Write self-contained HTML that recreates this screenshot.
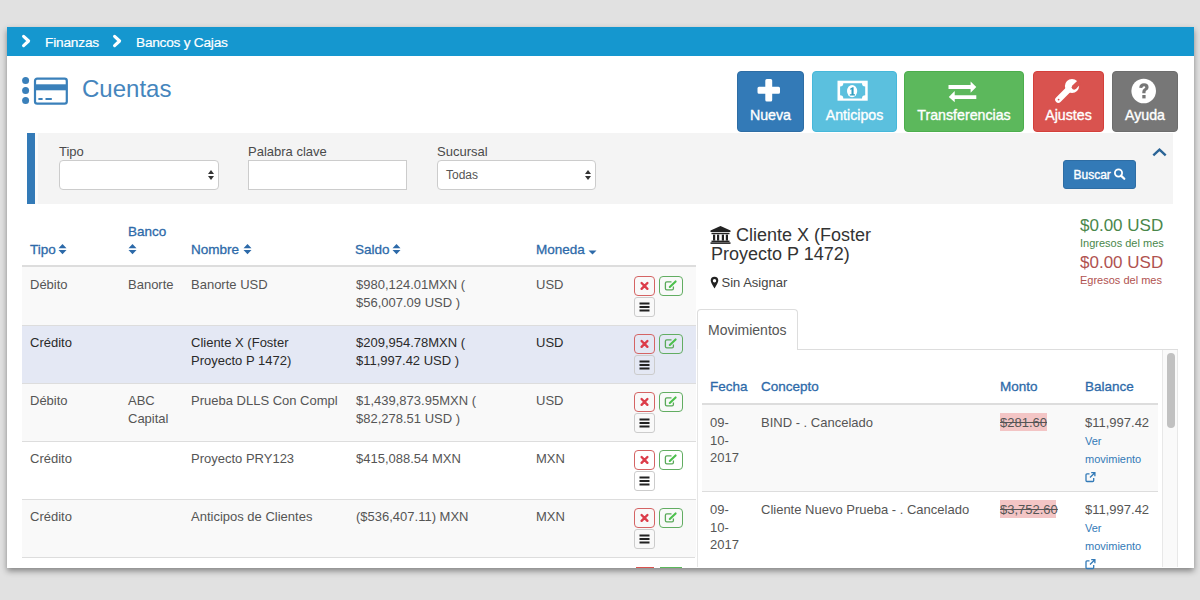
<!DOCTYPE html>
<html><head><meta charset="utf-8"><style>
html,body{margin:0;padding:0;}
body{width:1200px;height:600px;background:#e1e1e1;position:relative;overflow:hidden;font-family:"Liberation Sans", sans-serif;}
.a{position:absolute;}
.t{position:absolute;white-space:nowrap;}
s{text-decoration:line-through;}
</style></head><body>
<div class="a" style="left:7px;top:27px;width:1187px;height:541px;background:#fff;box-shadow:0 3px 6px rgba(0,0,0,0.42);"></div>
<div class="a" style="left:7px;top:27px;width:1187px;height:29px;background:#1597cf;"></div>
<svg class="a" style="left:21px;top:34.3px" width="12" height="14" viewBox="0 0 12 14"><path d="M2.6 2.3 L7.6 7 L2.6 11.7" fill="none" stroke="#fff" stroke-width="3.1" stroke-linejoin="round" stroke-linecap="round"/></svg>
<svg class="a" style="left:112px;top:34.3px" width="12" height="14" viewBox="0 0 12 14"><path d="M2.6 2.3 L7.6 7 L2.6 11.7" fill="none" stroke="#fff" stroke-width="3.1" stroke-linejoin="round" stroke-linecap="round"/></svg>
<div class="t " style="left:45px;top:35.85px;font-size:13.7px;line-height:13.7px;color:#fff;font-weight:normal;letter-spacing:-0.2px;-webkit-text-stroke:0.2px #fff;">Finanzas</div>
<div class="t " style="left:136px;top:35.85px;font-size:13.7px;line-height:13.7px;color:#fff;font-weight:normal;letter-spacing:-0.25px;-webkit-text-stroke:0.2px #fff;">Bancos y Cajas</div>
<svg class="a" style="left:20px;top:75px" width="50" height="32" viewBox="0 0 50 32">
<circle cx="5.6" cy="5.5" r="3.5" fill="#3a80ba"/><circle cx="5.6" cy="15.6" r="3.5" fill="#3a80ba"/><circle cx="5.6" cy="25.5" r="3.5" fill="#3a80ba"/>
<rect x="15" y="3.7" width="31.8" height="25" rx="2.2" fill="none" stroke="#3a80ba" stroke-width="2.2"/>
<rect x="15" y="9.3" width="32" height="6" fill="#3a80ba"/>
<rect x="18.4" y="23" width="4.2" height="2" fill="#3a80ba"/><rect x="25.5" y="23" width="6.3" height="2" fill="#3a80ba"/>
</svg>
<div class="t " style="left:82px;top:76.50px;font-size:24px;line-height:24px;color:#4585bd;font-weight:normal;">Cuentas</div>
<div class="a" style="left:737px;top:71px;width:67px;height:61px;background:#337ab7;border:1px solid #2e6da4;box-sizing:border-box;border-radius:4px;"></div>
<div class="t" style="left:737px;top:108.00px;width:67px;text-align:center;font-size:14.2px;line-height:14px;color:#fff;-webkit-text-stroke:0.35px #fff;">Nueva</div>
<div class="a" style="left:812px;top:71px;width:85px;height:61px;background:#5bc0de;border:1px solid #46b8da;box-sizing:border-box;border-radius:4px;"></div>
<div class="t" style="left:812px;top:108.00px;width:85px;text-align:center;font-size:14.2px;line-height:14px;color:#fff;-webkit-text-stroke:0.35px #fff;">Anticipos</div>
<div class="a" style="left:904px;top:71px;width:120px;height:61px;background:#5cb85c;border:1px solid #4cae4c;box-sizing:border-box;border-radius:4px;"></div>
<div class="t" style="left:904px;top:108.00px;width:120px;text-align:center;font-size:14.2px;line-height:14px;color:#fff;-webkit-text-stroke:0.35px #fff;">Transferencias</div>
<div class="a" style="left:1033px;top:71px;width:71px;height:61px;background:#d9534f;border:1px solid #d43f3a;box-sizing:border-box;border-radius:4px;"></div>
<div class="t" style="left:1033px;top:108.00px;width:71px;text-align:center;font-size:14.2px;line-height:14px;color:#fff;-webkit-text-stroke:0.35px #fff;">Ajustes</div>
<div class="a" style="left:1112px;top:71px;width:66px;height:61px;background:#777777;border:1px solid #6d6d6d;box-sizing:border-box;border-radius:4px;"></div>
<div class="t" style="left:1112px;top:108.00px;width:66px;text-align:center;font-size:14.2px;line-height:14px;color:#fff;-webkit-text-stroke:0.35px #fff;">Ayuda</div>
<svg class="a" style="left:757px;top:79px" width="24" height="23" viewBox="0 0 24 23"><path d="M8.3 1.5 Q8.3 0 9.8 0 H13.7 Q15.2 0 15.2 1.5 V7.8 H21.5 Q23 7.8 23 9.3 V13.2 Q23 14.7 21.5 14.7 H15.2 V21 Q15.2 22.5 13.7 22.5 H9.8 Q8.3 22.5 8.3 21 V14.7 H2 Q0.5 14.7 0.5 13.2 V9.3 Q0.5 7.8 2 7.8 H8.3 Z" fill="#fff"/></svg>
<svg class="a" style="left:837px;top:80px" width="32" height="22" viewBox="0 0 32 22">
<rect x="0.5" y="0.7" width="30.2" height="20" fill="#fff"/>
<path d="M6.3 3.2 H25 A3.2 3.2 0 0 0 28.2 6.4 V15.2 A3.2 3.2 0 0 0 25 18.4 H6.3 A3.2 3.2 0 0 0 3.1 15.2 V6.4 A3.2 3.2 0 0 0 6.3 3.2 Z" fill="#5bc0de"/>
<ellipse cx="15.1" cy="11.1" rx="5.1" ry="6.2" fill="#fff"/>
<path d="M13.3 8.6 L15.6 7.2 H16.6 V14.2 H18 V15.4 H12.8 V14.2 H14.5 V9.2 L13.3 9.9 Z" fill="#2f9ec0"/>
</svg>
<svg class="a" style="left:946px;top:79px" width="34" height="26" viewBox="0 0 34 26">
<path d="M2.5 6 H24.6 V2.4 L30.3 8 L24.6 13.7 V10 H2.5 Z" fill="#fff"/>
<path d="M30.3 16.3 H8.7 V12 L2.8 18 L8.7 23.3 V20 H30.3 Z" fill="#fff"/>
</svg>
<svg class="a" style="left:1050px;top:76px" width="32" height="32" viewBox="0 0 32 32">
<line x1="19" y1="13" x2="8.3" y2="23.7" stroke="#fff" stroke-width="6.2" stroke-linecap="round"/>
<circle cx="22" cy="10" r="7.1" fill="#fff"/>
<path d="M22.4 9.6 L27.6 4.4 L31 7.8 L25.8 13 Z" fill="#d9534f"/>
<circle cx="24.1" cy="11.3" r="2.4" fill="#d9534f"/>
<circle cx="8.6" cy="23.6" r="0.9" fill="#d9534f"/>
</svg>
<svg class="a" style="left:1130px;top:77px" width="28" height="28" viewBox="0 0 28 28">
<circle cx="13.7" cy="14" r="12.3" fill="#fff"/>
<path d="M9.2 10.8 Q9.5 6.3 14 6.3 Q18.6 6.3 18.6 10.2 Q18.6 12.3 16.4 13.6 Q15.5 14.2 15.5 15.5 V16.2 H12.3 V15 Q12.3 12.8 14 11.8 Q15.3 11 15.3 10.2 Q15.3 9.2 14 9.2 Q12.6 9.2 12.2 11 Z" fill="#777"/>
<rect x="12.3" y="18" width="3.3" height="3.4" fill="#777"/>
</svg>
<div class="a" style="left:27px;top:133px;width:1146px;height:71px;background:#f4f4f4;"></div>
<div class="a" style="left:27px;top:133px;width:7.5px;height:71px;background:#337ab7;"></div>
<div class="a" style="left:34.5px;top:133px;width:3px;height:71px;background:#fafafa;"></div>
<div class="t " style="left:59px;top:145.30px;font-size:13px;line-height:13px;color:#4a4a4a;font-weight:normal;">Tipo</div>
<div class="t " style="left:248px;top:145.30px;font-size:13px;line-height:13px;color:#4a4a4a;font-weight:normal;">Palabra clave</div>
<div class="t " style="left:437px;top:145.30px;font-size:13px;line-height:13px;color:#4a4a4a;font-weight:normal;">Sucursal</div>
<div class="a" style="left:59px;top:160px;width:160px;height:30px;background:#fff;border:1px solid #ccc;box-sizing:border-box;border-radius:4px;"></div>
<svg class="a" style="left:207px;top:168px" width="8" height="14" viewBox="0 0 8 14"><path d="M1 6 L4 2 L7 6 Z M1 8 L4 12 L7 8 Z" fill="#333"/></svg>
<div class="a" style="left:248px;top:160px;width:159px;height:30px;background:#fff;border:1px solid #ccc;box-sizing:border-box;"></div>
<div class="a" style="left:437px;top:160px;width:159px;height:30px;background:#fff;border:1px solid #ccc;box-sizing:border-box;border-radius:4px;"></div>
<svg class="a" style="left:584px;top:168px" width="8" height="14" viewBox="0 0 8 14"><path d="M1 6 L4 2 L7 6 Z M1 8 L4 12 L7 8 Z" fill="#333"/></svg>
<div class="t " style="left:446px;top:169.00px;font-size:12px;line-height:12px;color:#555;font-weight:normal;">Todas</div>
<div class="a" style="left:1063px;top:160px;width:73px;height:29px;background:#337ab7;border:1px solid #2e6da4;box-sizing:border-box;border-radius:3px;"></div>
<div class="t " style="left:1073.5px;top:169.00px;font-size:12px;line-height:12px;color:#fff;font-weight:normal;-webkit-text-stroke:0.35px #fff;">Buscar</div>
<svg class="a" style="left:1113px;top:167px" width="14" height="14" viewBox="0 0 14 14"><circle cx="5.5" cy="6" r="3.6" fill="none" stroke="#fff" stroke-width="1.8"/><path d="M8 8.6 L11.3 11.8" stroke="#fff" stroke-width="2.2" stroke-linecap="round"/></svg>
<svg class="a" style="left:1151px;top:146px" width="17" height="12" viewBox="0 0 17 12"><path d="M2.3 9.3 L8.5 3.6 L14.7 9.3" fill="none" stroke="#2a6496" stroke-width="2.4"/></svg>
<div class="t " style="left:30px;top:242.75px;font-size:13.5px;line-height:13.5px;color:#2d6aa9;font-weight:normal;-webkit-text-stroke:0.3px #2d6aa9;">Tipo</div>
<svg class="a" style="left:58px;top:243px" width="9" height="13" viewBox="0 0 9 13"><path d="M0.5 5.2 L4.5 1 L8.5 5.2 Z M0.5 7 L4.5 11.2 L8.5 7 Z" fill="#2d6aa9"/></svg>
<div class="t " style="left:128px;top:224.75px;font-size:13.5px;line-height:13.5px;color:#2d6aa9;font-weight:normal;-webkit-text-stroke:0.3px #2d6aa9;">Banco</div>
<svg class="a" style="left:128px;top:243px" width="9" height="13" viewBox="0 0 9 13"><path d="M0.5 5.2 L4.5 1 L8.5 5.2 Z M0.5 7 L4.5 11.2 L8.5 7 Z" fill="#2d6aa9"/></svg>
<div class="t " style="left:191px;top:242.75px;font-size:13.5px;line-height:13.5px;color:#2d6aa9;font-weight:normal;-webkit-text-stroke:0.3px #2d6aa9;">Nombre</div>
<svg class="a" style="left:243px;top:243px" width="9" height="13" viewBox="0 0 9 13"><path d="M0.5 5.2 L4.5 1 L8.5 5.2 Z M0.5 7 L4.5 11.2 L8.5 7 Z" fill="#2d6aa9"/></svg>
<div class="t " style="left:355px;top:242.75px;font-size:13.5px;line-height:13.5px;color:#2d6aa9;font-weight:normal;-webkit-text-stroke:0.3px #2d6aa9;">Saldo</div>
<svg class="a" style="left:392px;top:243px" width="9" height="13" viewBox="0 0 9 13"><path d="M0.5 5.2 L4.5 1 L8.5 5.2 Z M0.5 7 L4.5 11.2 L8.5 7 Z" fill="#2d6aa9"/></svg>
<div class="t " style="left:536px;top:242.75px;font-size:13.5px;line-height:13.5px;color:#2d6aa9;font-weight:normal;-webkit-text-stroke:0.3px #2d6aa9;">Moneda</div>
<svg class="a" style="left:588px;top:243px" width="9" height="13" viewBox="0 0 9 13"><path d="M0.5 7.5 L4.5 11.5 L8.5 7.5 Z" fill="#2d6aa9"/></svg>
<div class="a" style="left:22px;top:265px;width:674px;height:2px;background:#ddd;"></div>
<div class="a" style="left:22px;top:267px;width:674px;height:58px;background:#f9f9f9;"></div>
<div class="t " style="left:30px;top:275.50px;font-size:13px;line-height:18px;color:#555;font-weight:normal;">Débito</div>
<div class="t " style="left:128px;top:275.50px;font-size:13px;line-height:18px;color:#555;font-weight:normal;">Banorte</div>
<div class="t " style="left:191px;top:275.50px;font-size:13px;line-height:18px;color:#555;font-weight:normal;">Banorte USD</div>
<div class="t " style="left:356px;top:275.50px;font-size:13px;line-height:18px;color:#555;font-weight:normal;">$980,124.01MXN (<br>$56,007.09 USD )</div>
<div class="t " style="left:536px;top:275.50px;font-size:13px;line-height:18px;color:#555;font-weight:normal;">USD</div>
<div class="a" style="left:634px;top:276px;width:21px;height:20px;box-sizing:border-box;border-radius:3px;border:1.5px solid #d46464;border-radius:4px;"></div>
<svg class="a" style="left:634px;top:276px" width="21" height="20" viewBox="0 0 21 20"><path d="M7.6 7 L13.4 12.8 M13.4 7 L7.6 12.8" stroke="#dc3d4a" stroke-width="2.4" stroke-linecap="round"/></svg>
<div class="a" style="left:659px;top:276px;width:24px;height:20px;box-sizing:border-box;border-radius:3px;border:1.5px solid #62ad62;border-radius:4px;"></div>
<svg class="a" style="left:659px;top:276px" width="24" height="20" viewBox="0 0 24 20"><path d="M12.5 5.8 H7.8 Q6.4 5.8 6.4 7.2 V12.4 Q6.4 13.8 7.8 13.8 H13 Q14.4 13.8 14.4 12.4 V10.5" fill="none" stroke="#5aa95a" stroke-width="1.3"/><path d="M10.8 11 L16.6 5.4" stroke="#4cc04c" stroke-width="2.1" stroke-linecap="round"/></svg>
<div class="a" style="left:634px;top:297px;width:21px;height:20px;box-sizing:border-box;border-radius:3px;border:1px solid #ccc;"></div>
<svg class="a" style="left:634px;top:297px" width="21" height="20" viewBox="0 0 21 20"><path d="M5.5 6.5 H15.5 M5.5 10 H15.5 M5.5 13.5 H15.5" stroke="#222" stroke-width="1.8"/></svg>
<div class="a" style="left:22px;top:325px;width:674px;height:58px;background:#e4e8f4;"></div>
<div class="a" style="left:22px;top:325px;width:674px;height:1px;background:#ddd;"></div>
<div class="t " style="left:30px;top:333.50px;font-size:13px;line-height:18px;color:#2a2a2a;font-weight:normal;">Crédito</div>
<div class="t " style="left:128px;top:333.50px;font-size:13px;line-height:18px;color:#2a2a2a;font-weight:normal;"></div>
<div class="t " style="left:191px;top:333.50px;font-size:13px;line-height:18px;color:#2a2a2a;font-weight:normal;">Cliente X (Foster<br>Proyecto P 1472)</div>
<div class="t " style="left:356px;top:333.50px;font-size:13px;line-height:18px;color:#2a2a2a;font-weight:normal;">$209,954.78MXN (<br>$11,997.42 USD )</div>
<div class="t " style="left:536px;top:333.50px;font-size:13px;line-height:18px;color:#2a2a2a;font-weight:normal;">USD</div>
<div class="a" style="left:634px;top:334px;width:21px;height:20px;box-sizing:border-box;border-radius:3px;border:1.5px solid #d46464;border-radius:4px;"></div>
<svg class="a" style="left:634px;top:334px" width="21" height="20" viewBox="0 0 21 20"><path d="M7.6 7 L13.4 12.8 M13.4 7 L7.6 12.8" stroke="#dc3d4a" stroke-width="2.4" stroke-linecap="round"/></svg>
<div class="a" style="left:659px;top:334px;width:24px;height:20px;box-sizing:border-box;border-radius:3px;border:1.5px solid #62ad62;border-radius:4px;"></div>
<svg class="a" style="left:659px;top:334px" width="24" height="20" viewBox="0 0 24 20"><path d="M12.5 5.8 H7.8 Q6.4 5.8 6.4 7.2 V12.4 Q6.4 13.8 7.8 13.8 H13 Q14.4 13.8 14.4 12.4 V10.5" fill="none" stroke="#5aa95a" stroke-width="1.3"/><path d="M10.8 11 L16.6 5.4" stroke="#4cc04c" stroke-width="2.1" stroke-linecap="round"/></svg>
<div class="a" style="left:634px;top:355px;width:21px;height:20px;box-sizing:border-box;border-radius:3px;border:1px solid #ccc;"></div>
<svg class="a" style="left:634px;top:355px" width="21" height="20" viewBox="0 0 21 20"><path d="M5.5 6.5 H15.5 M5.5 10 H15.5 M5.5 13.5 H15.5" stroke="#222" stroke-width="1.8"/></svg>
<div class="a" style="left:22px;top:383px;width:674px;height:58px;background:#f9f9f9;"></div>
<div class="a" style="left:22px;top:383px;width:674px;height:1px;background:#ddd;"></div>
<div class="t " style="left:30px;top:391.50px;font-size:13px;line-height:18px;color:#555;font-weight:normal;">Débito</div>
<div class="t " style="left:128px;top:391.50px;font-size:13px;line-height:18px;color:#555;font-weight:normal;">ABC<br>Capital</div>
<div class="t " style="left:191px;top:391.50px;font-size:13px;line-height:18px;color:#555;font-weight:normal;">Prueba DLLS Con Compl</div>
<div class="t " style="left:356px;top:391.50px;font-size:13px;line-height:18px;color:#555;font-weight:normal;">$1,439,873.95MXN (<br>$82,278.51 USD )</div>
<div class="t " style="left:536px;top:391.50px;font-size:13px;line-height:18px;color:#555;font-weight:normal;">USD</div>
<div class="a" style="left:634px;top:392px;width:21px;height:20px;box-sizing:border-box;border-radius:3px;border:1.5px solid #d46464;border-radius:4px;"></div>
<svg class="a" style="left:634px;top:392px" width="21" height="20" viewBox="0 0 21 20"><path d="M7.6 7 L13.4 12.8 M13.4 7 L7.6 12.8" stroke="#dc3d4a" stroke-width="2.4" stroke-linecap="round"/></svg>
<div class="a" style="left:659px;top:392px;width:24px;height:20px;box-sizing:border-box;border-radius:3px;border:1.5px solid #62ad62;border-radius:4px;"></div>
<svg class="a" style="left:659px;top:392px" width="24" height="20" viewBox="0 0 24 20"><path d="M12.5 5.8 H7.8 Q6.4 5.8 6.4 7.2 V12.4 Q6.4 13.8 7.8 13.8 H13 Q14.4 13.8 14.4 12.4 V10.5" fill="none" stroke="#5aa95a" stroke-width="1.3"/><path d="M10.8 11 L16.6 5.4" stroke="#4cc04c" stroke-width="2.1" stroke-linecap="round"/></svg>
<div class="a" style="left:634px;top:413px;width:21px;height:20px;box-sizing:border-box;border-radius:3px;border:1px solid #ccc;"></div>
<svg class="a" style="left:634px;top:413px" width="21" height="20" viewBox="0 0 21 20"><path d="M5.5 6.5 H15.5 M5.5 10 H15.5 M5.5 13.5 H15.5" stroke="#222" stroke-width="1.8"/></svg>
<div class="a" style="left:22px;top:441px;width:674px;height:58px;background:#ffffff;"></div>
<div class="a" style="left:22px;top:441px;width:674px;height:1px;background:#ddd;"></div>
<div class="t " style="left:30px;top:449.50px;font-size:13px;line-height:18px;color:#555;font-weight:normal;">Crédito</div>
<div class="t " style="left:128px;top:449.50px;font-size:13px;line-height:18px;color:#555;font-weight:normal;"></div>
<div class="t " style="left:191px;top:449.50px;font-size:13px;line-height:18px;color:#555;font-weight:normal;">Proyecto PRY123</div>
<div class="t " style="left:356px;top:449.50px;font-size:13px;line-height:18px;color:#555;font-weight:normal;">$415,088.54 MXN</div>
<div class="t " style="left:536px;top:449.50px;font-size:13px;line-height:18px;color:#555;font-weight:normal;">MXN</div>
<div class="a" style="left:634px;top:450px;width:21px;height:20px;box-sizing:border-box;border-radius:3px;border:1.5px solid #d46464;border-radius:4px;"></div>
<svg class="a" style="left:634px;top:450px" width="21" height="20" viewBox="0 0 21 20"><path d="M7.6 7 L13.4 12.8 M13.4 7 L7.6 12.8" stroke="#dc3d4a" stroke-width="2.4" stroke-linecap="round"/></svg>
<div class="a" style="left:659px;top:450px;width:24px;height:20px;box-sizing:border-box;border-radius:3px;border:1.5px solid #62ad62;border-radius:4px;"></div>
<svg class="a" style="left:659px;top:450px" width="24" height="20" viewBox="0 0 24 20"><path d="M12.5 5.8 H7.8 Q6.4 5.8 6.4 7.2 V12.4 Q6.4 13.8 7.8 13.8 H13 Q14.4 13.8 14.4 12.4 V10.5" fill="none" stroke="#5aa95a" stroke-width="1.3"/><path d="M10.8 11 L16.6 5.4" stroke="#4cc04c" stroke-width="2.1" stroke-linecap="round"/></svg>
<div class="a" style="left:634px;top:471px;width:21px;height:20px;box-sizing:border-box;border-radius:3px;border:1px solid #ccc;"></div>
<svg class="a" style="left:634px;top:471px" width="21" height="20" viewBox="0 0 21 20"><path d="M5.5 6.5 H15.5 M5.5 10 H15.5 M5.5 13.5 H15.5" stroke="#222" stroke-width="1.8"/></svg>
<div class="a" style="left:22px;top:499px;width:674px;height:58px;background:#f9f9f9;"></div>
<div class="a" style="left:22px;top:499px;width:674px;height:1px;background:#ddd;"></div>
<div class="t " style="left:30px;top:507.50px;font-size:13px;line-height:18px;color:#555;font-weight:normal;">Crédito</div>
<div class="t " style="left:128px;top:507.50px;font-size:13px;line-height:18px;color:#555;font-weight:normal;"></div>
<div class="t " style="left:191px;top:507.50px;font-size:13px;line-height:18px;color:#555;font-weight:normal;">Anticipos de Clientes</div>
<div class="t " style="left:356px;top:507.50px;font-size:13px;line-height:18px;color:#555;font-weight:normal;">($536,407.11) MXN</div>
<div class="t " style="left:536px;top:507.50px;font-size:13px;line-height:18px;color:#555;font-weight:normal;">MXN</div>
<div class="a" style="left:634px;top:508px;width:21px;height:20px;box-sizing:border-box;border-radius:3px;border:1.5px solid #d46464;border-radius:4px;"></div>
<svg class="a" style="left:634px;top:508px" width="21" height="20" viewBox="0 0 21 20"><path d="M7.6 7 L13.4 12.8 M13.4 7 L7.6 12.8" stroke="#dc3d4a" stroke-width="2.4" stroke-linecap="round"/></svg>
<div class="a" style="left:659px;top:508px;width:24px;height:20px;box-sizing:border-box;border-radius:3px;border:1.5px solid #62ad62;border-radius:4px;"></div>
<svg class="a" style="left:659px;top:508px" width="24" height="20" viewBox="0 0 24 20"><path d="M12.5 5.8 H7.8 Q6.4 5.8 6.4 7.2 V12.4 Q6.4 13.8 7.8 13.8 H13 Q14.4 13.8 14.4 12.4 V10.5" fill="none" stroke="#5aa95a" stroke-width="1.3"/><path d="M10.8 11 L16.6 5.4" stroke="#4cc04c" stroke-width="2.1" stroke-linecap="round"/></svg>
<div class="a" style="left:634px;top:529px;width:21px;height:20px;box-sizing:border-box;border-radius:3px;border:1px solid #ccc;"></div>
<svg class="a" style="left:634px;top:529px" width="21" height="20" viewBox="0 0 21 20"><path d="M5.5 6.5 H15.5 M5.5 10 H15.5 M5.5 13.5 H15.5" stroke="#222" stroke-width="1.8"/></svg>
<div class="a" style="left:22px;top:557px;width:673px;height:1px;background:#ddd;"></div>
<div class="a" style="left:636px;top:567px;width:18px;height:1px;background:#d9534f;"></div>
<div class="a" style="left:660px;top:567px;width:22px;height:1px;background:#5cb85c;"></div>
<svg class="a" style="left:710px;top:225px" width="22" height="20" viewBox="0 0 22 20">
<path d="M10.5 1 L20.5 5.5 V7 H0.5 V5.5 Z" fill="#222"/>
<rect x="1.5" y="7.8" width="18" height="1.4" fill="#222"/>
<rect x="3" y="9.6" width="2.2" height="6" fill="#222"/><rect x="7" y="9.6" width="2.2" height="6" fill="#222"/><rect x="11.8" y="9.6" width="2.2" height="6" fill="#222"/><rect x="15.8" y="9.6" width="2.2" height="6" fill="#222"/>
<rect x="1.5" y="15.6" width="18" height="1.4" fill="#222"/><rect x="0.5" y="17.3" width="20" height="1.6" fill="#222"/>
</svg>
<div class="t " style="left:736px;top:226.00px;font-size:18px;line-height:18px;color:#333;font-weight:normal;">Cliente X (Foster</div>
<div class="t " style="left:711px;top:244.50px;font-size:18px;line-height:18px;color:#333;font-weight:normal;">Proyecto P 1472)</div>
<svg class="a" style="left:710px;top:276px" width="10" height="14" viewBox="0 0 10 14"><path d="M4.5 0.8 Q8.3 0.8 8.3 4.6 Q8.3 6.5 4.5 12.5 Q0.7 6.5 0.7 4.6 Q0.7 0.8 4.5 0.8 Z M4.5 3 A1.7 1.7 0 1 0 4.5 6.4 A1.7 1.7 0 1 0 4.5 3 Z" fill="#222" fill-rule="evenodd"/></svg>
<div class="t " style="left:721.5px;top:276.00px;font-size:13px;line-height:13px;color:#444;font-weight:normal;">Sin Asignar</div>
<div class="t " style="left:1080px;top:216.50px;font-size:17px;line-height:17px;color:#4a874b;font-weight:normal;">$0.00 USD</div>
<div class="t " style="left:1080px;top:238.00px;font-size:11px;line-height:11px;color:#4a874b;font-weight:normal;">Ingresos del mes</div>
<div class="t " style="left:1080px;top:254.00px;font-size:17px;line-height:17px;color:#b05250;font-weight:normal;">$0.00 USD</div>
<div class="t " style="left:1080px;top:275.00px;font-size:11px;line-height:11px;color:#b05250;font-weight:normal;">Egresos del mes</div>
<div class="a" style="left:697px;top:349px;width:481px;height:1px;background:#ddd;"></div>
<div class="a" style="left:697px;top:309px;width:101px;height:41px;background:#fff;border:1px solid #ddd;border-bottom:none;box-sizing:border-box;border-radius:4px 4px 0 0;"></div>
<div class="t " style="left:708px;top:323.00px;font-size:14px;line-height:14px;color:#555;font-weight:normal;">Movimientos</div>
<div class="a" style="left:697px;top:349px;width:1px;height:218px;background:#e6e6e6;"></div>
<div class="a" style="left:1162px;top:350px;width:16px;height:217px;background:#fafafa;border-left:1px solid #e8e8e8;border-right:1px solid #e8e8e8;box-sizing:border-box;"></div>
<div class="a" style="left:1167px;top:353px;width:7.5px;height:75px;background:#c1c1c1;border-radius:4px;"></div>
<div class="t " style="left:710px;top:380.25px;font-size:13.5px;line-height:13.5px;color:#2d6aa9;font-weight:normal;-webkit-text-stroke:0.3px #2d6aa9;">Fecha</div>
<div class="t " style="left:761px;top:380.25px;font-size:13.5px;line-height:13.5px;color:#2d6aa9;font-weight:normal;-webkit-text-stroke:0.3px #2d6aa9;">Concepto</div>
<div class="t " style="left:1000px;top:380.25px;font-size:13.5px;line-height:13.5px;color:#2d6aa9;font-weight:normal;-webkit-text-stroke:0.3px #2d6aa9;">Monto</div>
<div class="t " style="left:1085px;top:380.25px;font-size:13.5px;line-height:13.5px;color:#2d6aa9;font-weight:normal;-webkit-text-stroke:0.3px #2d6aa9;">Balance</div>
<div class="a" style="left:702px;top:403px;width:456px;height:2px;background:#ddd;"></div>
<div class="a" style="left:702px;top:405px;width:456px;height:87px;background:#f9f9f9;"></div>
<div class="a" style="left:702px;top:491px;width:456px;height:1px;background:#ddd;"></div>
<div class="t " style="left:710px;top:413.90px;font-size:13px;line-height:17.8px;color:#555;font-weight:normal;">09-<br>10-<br>2017</div>
<div class="t " style="left:761px;top:414.05px;font-size:13px;line-height:17.5px;color:#555;font-weight:normal;">BIND - . Cancelado</div>
<div class="a" style="left:1000px;top:413px;width:47px;height:18px;background:#f3c5c5;"></div>
<div class="t " style="left:1000px;top:414.05px;font-size:13px;line-height:17.5px;color:#555;font-weight:normal;"><s>$281.60</s></div>
<div class="t " style="left:1085px;top:414.05px;font-size:13px;line-height:17.5px;color:#555;font-weight:normal;">$11,997.42</div>
<div class="t " style="left:1085px;top:432.30px;font-size:11px;line-height:18px;color:#337ab7;font-weight:normal;">Ver<br>movimiento</div>
<svg class="a" style="left:1084px;top:471px" width="12" height="12" viewBox="0 0 12 12"><path d="M5.5 2.8 H3 Q2 2.8 2 3.8 V9.5 Q2 10.5 3 10.5 H8.7 Q9.7 10.5 9.7 9.5 V7" fill="none" stroke="#337ab7" stroke-width="1.3"/><path d="M6 6.5 L10.3 2.2 M7.2 1.6 H10.9 V5.3" fill="none" stroke="#337ab7" stroke-width="1.3"/></svg>
<div class="t " style="left:710px;top:500.90px;font-size:13px;line-height:17.8px;color:#555;font-weight:normal;">09-<br>10-<br>2017</div>
<div class="t " style="left:761px;top:501.05px;font-size:13px;line-height:17.5px;color:#555;font-weight:normal;">Cliente Nuevo Prueba - . Cancelado</div>
<div class="a" style="left:1000px;top:500px;width:56px;height:18px;background:#f3c5c5;"></div>
<div class="t " style="left:1000px;top:501.05px;font-size:13px;line-height:17.5px;color:#555;font-weight:normal;"><s>$3,752.60</s></div>
<div class="t " style="left:1085px;top:501.05px;font-size:13px;line-height:17.5px;color:#555;font-weight:normal;">$11,997.42</div>
<div class="t " style="left:1085px;top:519.30px;font-size:11px;line-height:18px;color:#337ab7;font-weight:normal;">Ver<br>movimiento</div>
<svg class="a" style="left:1084px;top:558px" width="12" height="12" viewBox="0 0 12 12"><path d="M5.5 2.8 H3 Q2 2.8 2 3.8 V9.5 Q2 10.5 3 10.5 H8.7 Q9.7 10.5 9.7 9.5 V7" fill="none" stroke="#337ab7" stroke-width="1.3"/><path d="M6 6.5 L10.3 2.2 M7.2 1.6 H10.9 V5.3" fill="none" stroke="#337ab7" stroke-width="1.3"/></svg>
</body></html>
